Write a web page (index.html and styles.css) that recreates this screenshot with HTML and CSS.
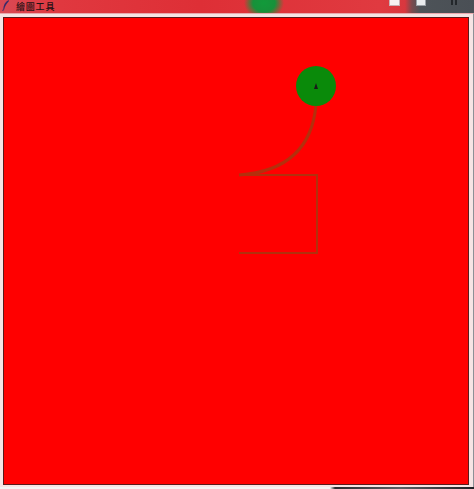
FILE: index.html
```html
<!DOCTYPE html>
<html lang="zh-Hant">
<head>
<meta charset="utf-8">
<title>繪圖工具</title>
<link rel="stylesheet" href="styles.css">
</head>
<body>
<div class="window">
  <div class="titlebar">
    <svg class="app-icon" width="8" height="11" viewBox="0 0 8 11">
      <path d="M6.5 0 C3 2 1.5 5 1.2 9.5 L2 10 C3 6 4.5 3.5 7 1 Z" fill="#3a2a6a"/>
      <path d="M1.2 9.5 L0.8 11" stroke="#3a2a6a" stroke-width="1"/>
    </svg>
    <span class="title">繪圖工具</span>
    <div class="caption-buttons">
      <span class="btn btn-min"></span>
      <span class="btn btn-max"></span>
      <span class="btn btn-close"><i></i><i></i></span>
    </div>
  </div>
  <div class="frame">
    <div class="canvas">
      <svg class="drawing" width="464" height="466" viewBox="0 0 464 466">
        <path d="M312 87 Q 306 152 235 157" fill="none" stroke="#b3300c" stroke-width="3"/>
        <path d="M235 157 L313 157 L313 235 L235 235" fill="none" stroke="#b3300c" stroke-width="2"/>
        <circle cx="312" cy="68" r="20" fill="#0a8a0a"/>
        <path d="M310 71 L312 65 L314 71 Z" fill="#1a1a1a"/>
      </svg>
    </div>
  </div>
  <div class="desktop-strip"></div>
</div>
</body>
</html>
```
FILE: styles.css
```css
html, body {
  margin: 0;
  padding: 0;
  background: #f2f2f2;
}
body {
  width: 474px;
  height: 489px;
  overflow: hidden;
  font-family: "Noto Sans CJK TC", "Noto Sans", sans-serif;
}
.window {
  width: 474px;
  height: 489px;
  display: flex;
  flex-direction: column;
}
.titlebar {
  height: 13px;
  display: flex;
  align-items: flex-start;
  padding-left: 2px;
  box-sizing: border-box;
  background:
    radial-gradient(ellipse 20px 16px at 264px 3px, #129a3a 0%, #17913a 55%, rgba(30,140,60,0) 100%),
    linear-gradient(90deg, #d94a55 0px, #e0383f 60px, #de2f36 200px, #e03a40 380px, #d9373e 405px, #7a4a4e 412px, #4d5358 420px, #4a4f55 474px);
}
.app-icon {
  flex: none;
}
.title {
  display: block;
  margin-left: 6px;
  font-size: 9px;
  line-height: 13px;
  font-weight: 500;
  color: #1e1014;
  letter-spacing: 0.8px;
}
.caption-buttons {
  margin-left: auto;
  display: flex;
  align-items: flex-start;
  gap: 14px;
  padding-right: 12px;
}
.btn {
  display: block;
  height: 5px;
}
.btn-min {
  width: 9px;
  background: #f7f2f2;
  border: 1px solid #c8b0b4;
  border-top: none;
}
.btn-max {
  width: 8px;
  background: #e9ecee;
  border: 1px solid #9aa0a6;
  border-top: none;
  margin-left: 2px;
}
.btn-close {
  width: 16px;
  display: flex;
  justify-content: center;
  gap: 2px;
  margin-left: 6px;
}
.btn-close i {
  display: block;
  width: 2px;
  height: 5px;
  background: #23272b;
}
.frame {
  flex: none;
  height: 474px;
  box-sizing: border-box;
  padding: 3px 5px 3px 3px;
  background: #f6e4e4;
  border-top: 1px solid #e9a9ad;
  border-right: 1px solid #8c9096;
}
.canvas {
  width: 466px;
  height: 468px;
  box-sizing: border-box;
  border: 1px solid #5a1a1a;
  background: #ff0000;
  overflow: hidden;
}
.drawing {
  display: block;
}
.desktop-strip {
  flex: 1;
  background: linear-gradient(90deg, #f4f4f4 0px, #f4f4f4 330px, #2a2c30 335px, #5a5e64 400px, #1e2024 474px);
}
```
